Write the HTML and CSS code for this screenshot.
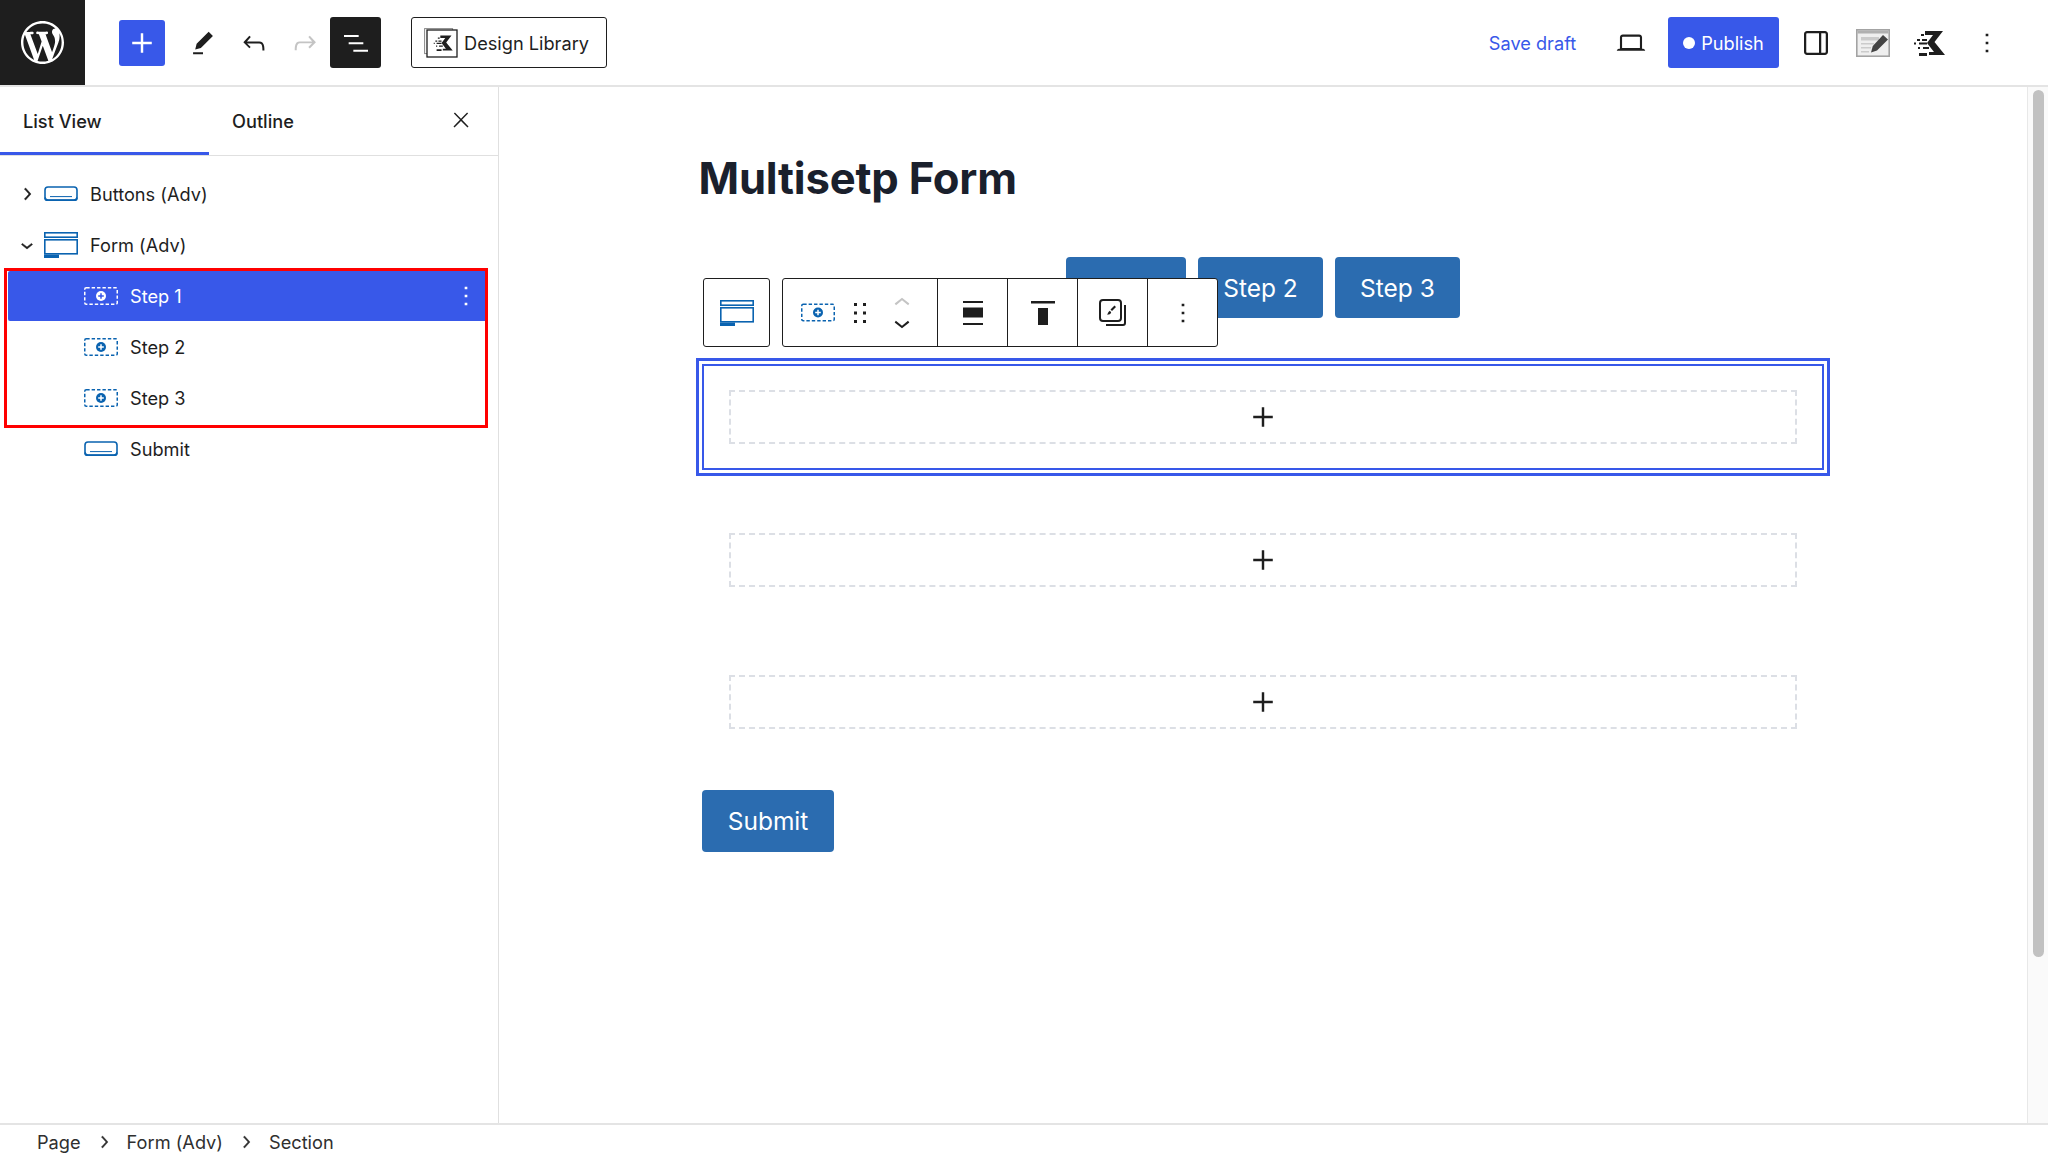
FILE: index.html
```html
<!DOCTYPE html>
<html lang="en">
<head>
<meta charset="utf-8">
<title>Multisetp Form</title>
<link rel="stylesheet" href="styles.css">
</head>
<body>
<svg class="defs" aria-hidden="true">
  <symbol id="i-section" viewBox="0 0 34 18">
    <rect x="0.75" y="0.75" width="32.5" height="16.5" rx="1.5" fill="none" stroke="currentColor" stroke-width="1.5" stroke-dasharray="3.4 2"/>
    <circle cx="17" cy="9" r="5" fill="currentColor"/>
    <path d="M14.2 9h5.6M17 6.2v5.6" stroke="var(--plus, #fff)" stroke-width="1.5"/>
  </symbol>
  <symbol id="i-buttons" viewBox="0 0 34 15">
    <rect x="1" y="1" width="32" height="13" rx="3" fill="none" stroke="currentColor" stroke-width="1.6"/>
    <path d="M1 11.5v0c0 1.7 1.3 3 3 3h26c1.7 0 3-1.3 3-3" fill="none" stroke="currentColor" stroke-width="1.8"/>
    <path d="M6 10.6h22" stroke="currentColor" stroke-width="1"/>
  </symbol>
  <symbol id="i-form" viewBox="0 0 34 26">
    <rect x="0.8" y="0.8" width="32.4" height="4.4" fill="none" stroke="currentColor" stroke-width="1.6"/>
    <rect x="0.8" y="7.8" width="32.4" height="14" fill="none" stroke="currentColor" stroke-width="1.6"/>
    <rect x="0" y="22.5" width="15" height="3.5" fill="currentColor"/>
  </symbol>
  <symbol id="i-more" viewBox="0 0 24 24"><path d="M13 19h-2v-2h2v2zm0-6h-2v-2h2v2zm0-6h-2V5h2v2z"/></symbol>
  <symbol id="i-chev-r" viewBox="0 0 24 24"><path d="M10.6 6L9.4 7l4.6 5-4.6 5 1.2 1 5.4-6z"/></symbol>
  <symbol id="i-chev-d" viewBox="0 0 24 24"><path d="M17.5 11.6L12 16l-5.5-4.4.9-1.2L12 14l4.5-3.6 1 1.2z"/></symbol>
  <symbol id="i-chev-u" viewBox="0 0 24 24"><path d="M6.5 12.4L12 8l5.5 4.4-.9 1.2L12 10l-4.5 3.6-1-1.2z"/></symbol>
  <symbol id="i-plus" viewBox="0 0 18 18"><path d="M8 1h2v7h7v2h-7v7H8v-7H1V8h7z"/></symbol>
  <symbol id="i-kadence" viewBox="0 0 32 26">
    <path d="M11 1H29L20.5 12L31 25H15V22H20L13 13L19 5H11Z"/>
    <path d="M7 4h3v2H7zM3 9h3v2H3zM8 9h5v2H8zM0 12.500h2v2H0zM5 12.500h8v2H5zM4 17h2v2H4zM9 17h6v2H9zM5 23h8v3H5z"/>
  </symbol>
</svg>

<header class="topbar">
  <a class="wp-logo" aria-label="WordPress">
    <svg class="wp-mark" viewBox="0 0 20 20"><path d="M20 10c0-5.51-4.49-10-10-10C4.48 0 0 4.49 0 10c0 5.52 4.48 10 10 10 5.51 0 10-4.48 10-10zM7.78 15.37L4.37 6.22c.55-.02 1.17-.08 1.17-.08.5-.06.44-1.13-.06-1.11 0 0-1.45.11-2.37.11-.18 0-.37 0-.58-.01C4.12 2.69 6.87 1.11 10 1.11c2.33 0 4.45.87 6.05 2.34-.68-.11-1.65.39-1.65 1.58 0 .74.45 1.36.9 2.1.35.61.55 1.36.55 2.46 0 1.49-1.4 5-1.4 5l-3.03-8.37c.54-.02.82-.17.82-.17.5-.05.44-1.25-.06-1.22 0 0-1.44.12-2.38.12-.87 0-2.33-.12-2.33-.12-.5-.03-.56 1.2-.06 1.22l.92.08 1.26 3.41zM17.41 10c.24-.64.74-1.87.43-4.25.7 1.29 1.05 2.71 1.05 4.25 0 3.29-1.73 6.24-4.4 7.78.97-2.59 1.94-5.2 2.92-7.78zM6.1 18.09C3.12 16.65 1.11 13.53 1.11 10c0-1.3.23-2.48.72-3.59C3.25 10.3 4.67 14.2 6.1 18.09zm4.03-6.63l2.58 6.98c-.86.29-1.76.45-2.71.45-.79 0-1.57-.11-2.29-.33.81-2.38 1.62-4.74 2.42-7.1z"/></svg>
  </a>
  <div class="tools-left">
    <button class="btn-inserter" aria-label="Add"><svg class="ic-plus-w"><use href="#i-plus"/></svg></button>
    <button class="tool"><svg class="ic-pen" viewBox="0 0 24 24"><path d="m19 7-3-3-8.5 8.5-1 4 4-1L19 7Zm-7 11.5H5V20h7v-1.5Z"/></svg></button>
    <button class="tool"><svg class="ic32" viewBox="0 0 24 24"><path d="M18.3 11.7c-.6-.6-1.4-.9-2.3-.9H6.7l2.9-3.3-1.1-1-4.5 5L8.5 16l1-1-2.7-2.7H16c.5 0 .9.2 1.3.5 1 1 1 3.4 1 4.5v.3h1.500v-.2c0-1.500 0-4.300-1.500-5.700z"/></svg></button>
    <button class="tool tool-muted"><svg class="ic32" viewBox="0 0 24 24"><path d="M15.6 6.5l-1.1 1 2.9 3.3H8c-.9 0-1.7.3-2.3.9-1.4 1.5-1.4 4.2-1.4 5.6v.2h1.5v-.3c0-1.1 0-3.5 1-4.5.3-.3.7-.5 1.3-.5h9.2L14.5 15l1.1 1.1 4.6-4.6-4.6-5z"/></svg></button>
    <button class="tool tool-on"><svg class="ic32" viewBox="0 0 24 24"><path d="M3 6h11v1.5H3V6Zm3.5 5.5h11V13h-11v-1.5ZM21 17H10v1.5h11V17Z"/></svg></button>
    <button class="btn-library">
      <svg class="ic-library" viewBox="0 0 34 30">
        <rect x="0.6" y="0.6" width="28" height="25" fill="#fff" stroke="#888" stroke-width="1"/>
        <rect x="3" y="2" width="30" height="27" fill="#fff" stroke="#1e1e1e" stroke-width="1.3"/>
        <g transform="translate(9.500 7) scale(.62)"><use href="#i-kadence" width="32" height="26"/></g>
      </svg>
      <span>Design Library</span>
    </button>
  </div>
  <div class="tools-right">
    <button class="btn-save">Save draft</button>
    <button class="tool"><svg class="ic34" viewBox="0 0 24 24"><path d="M20.5 16h-.7V8c0-1.1-.9-2-2-2H6.2c-1.1 0-2 .9-2 2v8h-.7c-.8 0-1.5.7-1.5 1.5h20c0-.8-.7-1.5-1.5-1.5zM5.7 8c0-.3.2-.5.5-.5h11.6c.3 0 .5.2.5.5v7.6H5.7V8z"/></svg></button>
    <button class="btn-publish"><i class="dot"></i>Publish</button>
    <button class="tool tool-w"><svg class="ic-side" viewBox="0 0 24 24"><path d="M18 4H6c-1.1 0-2 .9-2 2v12c0 1.1.9 2 2 2h12c1.1 0 2-.9 2-2V6c0-1.1-.9-2-2-2zm-4 14.5H6c-.3 0-.5-.2-.5-.5V6c0-.3.2-.5.5-.5h8v13zm4.5-.5c0 .3-.2.5-.5.5h-2.500v-13H18c.3 0 .5.2.5.5v12z"/></svg></button>
    <button class="tool tool-w">
      <svg class="ic-formedit" viewBox="0 0 34 28">
        <rect x="0.8" y="0.8" width="32.4" height="26.4" fill="#efefef" stroke="#a3a3a3" stroke-width="1.6"/>
        <rect x="1.5" y="1.5" width="31" height="3" fill="#b0b0b0"/>
        <path d="M5 8h18v3.500H5zM5 14h13v1.600H5zM5 18h10v1.600H5zM5 22h8v1.600H5z" fill="#cbcbcb"/>
        <path d="M27 6l5 4.500L21 21.500l-6 2 1.800-6.500z" fill="#444"/>
      </svg>
    </button>
    <button class="tool tool-w"><svg class="ic-kad"><use href="#i-kadence"/></svg></button>
    <button class="tool tool-w"><svg class="ic32"><use href="#i-more"/></svg></button>
  </div>
</header>

<main class="workspace">
  <aside class="sidebar">
    <div class="tabs">
      <span class="tab tab-on">List View</span>
      <span class="tab">Outline</span>
      <button class="tab-close" aria-label="Close"><svg class="ic24" viewBox="0 0 24 24"><path d="M13 11.800l6.100-6.300-1-1-6.100 6.200-6.100-6.200-1 1 6.100 6.300-6.500 6.700 1 1 6.500-6.600 6.500 6.600 1-1z"/></svg></button>
    </div>
    <div class="tree">
      <div class="row row-top">
        <svg class="caret"><use href="#i-chev-r"/></svg>
        <svg class="ic-block ic-h15"><use href="#i-buttons"/></svg>
        <span>Buttons (Adv)</span>
      </div>
      <div class="row row-top">
        <svg class="caret"><use href="#i-chev-d"/></svg>
        <svg class="ic-block ic-h26"><use href="#i-form"/></svg>
        <span>Form (Adv)</span>
      </div>
      <div class="row row-child row-selected">
        <svg class="ic-block ic-h18"><use href="#i-section"/></svg>
        <span>Step 1</span>
        <svg class="row-more"><use href="#i-more"/></svg>
      </div>
      <div class="row row-child">
        <svg class="ic-block ic-h18"><use href="#i-section"/></svg>
        <span>Step 2</span>
      </div>
      <div class="row row-child">
        <svg class="ic-block ic-h18"><use href="#i-section"/></svg>
        <span>Step 3</span>
      </div>
      <div class="row row-child">
        <svg class="ic-block ic-h15"><use href="#i-buttons"/></svg>
        <span>Submit</span>
      </div>
      <div class="annotation"></div>
    </div>
  </aside>

  <section class="canvas">
    <h1 class="title">Multisetp Form</h1>
    <div class="steps">
      <a class="kb-btn kb-step">Step 1</a>
      <a class="kb-btn kb-step">Step 2</a>
      <a class="kb-btn kb-step">Step 3</a>
    </div>
    <div class="form">
      <div class="block-toolbar">
        <div class="tb-group">
          <button class="tb-cell"><svg class="ic-tb-form"><use href="#i-form"/></svg></button>
        </div>
        <div class="tb-group">
          <div class="tb-cell tb-mover">
            <svg class="ic-tb-section"><use href="#i-section"/></svg>
            <svg class="ic-drag" viewBox="0 0 12 20"><path d="M0 0h3v3H0zM9 0h3v3H9zM0 8.500h3v3H0zM9 8.500h3v3H9zM0 17h3v3H0zM9 17h3v3H9z"/></svg>
            <span class="movers">
              <svg class="ic-mv ic-mv-off"><use href="#i-chev-u"/></svg>
              <svg class="ic-mv ic-mv-down"><use href="#i-chev-d"/></svg>
            </span>
          </div>
          <button class="tb-cell">
            <svg class="ic-tb" viewBox="0 0 24 26"><path d="M2 1h20v2H2zM2 7.500h20v10H2zM2 23h20v2H2z"/></svg>
          </button>
          <button class="tb-cell">
            <svg class="ic-tb" viewBox="0 0 24 26"><path d="M0 1h24v2.400H0zM7 8h10v17H7z"/></svg>
          </button>
          <button class="tb-cell">
            <svg class="ic-tb-style" viewBox="0 0 28 28">
              <rect x="1" y="1" width="21" height="21" rx="3" fill="none" stroke="#1e1e1e" stroke-width="2"/>
              <path d="M26 6v18c0 1.200-.8 2-2 2H7" fill="none" stroke="#1e1e1e" stroke-width="2"/>
              <path d="M15.500 6.500l1.500 1.500-4 4-1.500-1.500zM10.800 11.800l1.400 1.400c-.5 1.800-2 2.500-4 2.500.7-1 .8-2.900 2.600-3.900z" fill="#1e1e1e"/>
            </svg>
          </button>
          <button class="tb-cell"><svg class="ic32"><use href="#i-more"/></svg></button>
        </div>
      </div>
      <div class="form-section is-selected">
        <div class="appender"><svg class="ic-add"><use href="#i-plus"/></svg></div>
      </div>
      <div class="form-section">
        <div class="appender"><svg class="ic-add"><use href="#i-plus"/></svg></div>
      </div>
      <div class="form-section">
        <div class="appender"><svg class="ic-add"><use href="#i-plus"/></svg></div>
      </div>
      <a class="kb-btn kb-submit">Submit</a>
    </div>
  </section>

  <div class="scrollbar"><div class="scroll-thumb"></div></div>
</main>

<footer class="crumbs">
  <span>Page</span>
  <svg class="crumb-sep"><use href="#i-chev-r"/></svg>
  <span>Form (Adv)</span>
  <svg class="crumb-sep"><use href="#i-chev-r"/></svg>
  <span>Section</span>
</footer>
</body>
</html>
```

FILE: styles.css
```css
* { box-sizing: border-box; }
html, body { height: 100%; }
body {
  margin: 0;
  height: 1159px;
  display: flex;
  flex-direction: column;
  overflow: hidden;
  background: #fff;
  color: #1e1e1e;
  font-family: Inter, "Liberation Sans", sans-serif;
  font-size: 18.2px;
}
.defs { display: none; }
svg { display: block; fill: currentColor; flex: none; }
button {
  font: inherit;
  color: inherit;
  background: none;
  border: 0;
  padding: 0;
  display: flex;
  align-items: center;
  justify-content: center;
}

/* top bar */
.topbar {
  flex: none;
  height: 87px;
  display: flex;
  align-items: center;
  justify-content: space-between;
  border-bottom: 2px solid #e4e4e4;
}
.wp-logo {
  width: 85px;
  height: 85px;
  background: #1e1e1e;
  color: #fff;
  display: flex;
  align-items: center;
  justify-content: center;
}
.wp-mark { width: 43px; height: 43px; }
.tools-left { flex: 1; display: flex; align-items: center; padding-left: 34px; }
.tools-right { display: flex; align-items: center; padding-right: 33px; }
.btn-inserter {
  width: 46px;
  height: 46px;
  margin-right: 12px;
  background: #3858e9;
  border-radius: 3px;
  color: #fff;
}
.ic-plus-w { width: 22px; height: 22px; }
.tool { width: 51px; height: 51px; border-radius: 3px; }
.tool-w { width: 57px; }
.tool-muted { color: #c4c4c4; }
.tool-on { background: #1e1e1e; color: #fff; }
.ic32 { width: 32px; height: 32px; }
.ic34 { width: 34px; height: 34px; }
.ic24 { width: 24px; height: 24px; }
.ic-pen { width: 34px; height: 34px; }
.ic-side { width: 36px; height: 36px; }
.btn-library {
  width: 196px;
  height: 51px;
  margin-left: 30px;
  padding-left: 12px;
  gap: 6px;
  justify-content: flex-start;
  border: 1.5px solid #1e1e1e;
  border-radius: 3px;
}
.ic-library { width: 34px; height: 30px; }
.btn-save { color: #3858e9; width: 87px; margin-right: 29px; white-space: nowrap; }
.btn-publish {
  width: 111px;
  height: 51px;
  margin: 0 8px 0 12px;
  gap: 6px;
  background: #3858e9;
  color: #fff;
  border-radius: 3px;
}
.dot { width: 12px; height: 12px; border-radius: 50%; background: #fff; }
.ic-formedit { width: 34px; height: 28px; }
.ic-kad { width: 32px; height: 26px; }

/* workspace */
.workspace { flex: 1; min-height: 0; display: flex; }
.sidebar { flex: none; width: 499px; border-right: 1px solid #e0e0e0; }
.tabs {
  height: 69px;
  display: flex;
  align-items: stretch;
  position: relative;
  border-bottom: 1.5px solid #e0e0e0;
}
.tab {
  width: 209px;
  padding: 0 0 0 23px;
  display: flex;
  align-items: center;
  font-weight: 500;
}
.tab-on { box-shadow: inset 0 -3px 0 #3858e9; }
.tab-close { position: absolute; right: 25px; top: 21px; }
.tree { position: relative; padding-top: 12px; }
.row { height: 51px; display: flex; align-items: center; }
.row-top { padding-left: 15px; }
.caret { width: 24px; height: 24px; margin-right: 5px; stroke: currentColor; stroke-width: .5; }
.row-child { padding-left: 84px; }
.ic-block { width: 34px; margin-right: 12px; color: #0a63b0; }
.ic-h15 { height: 15px; }
.ic-h18 { height: 18px; }
.ic-h26 { height: 26px; }
.row-selected {
  height: 50px;
  margin: 1px 10px 0 8px;
  padding-left: 76px;
  background: #3858e9;
  color: #fff;
  border-radius: 2px;
  --plus: #3858e9;
}
.row-selected .ic-block { color: #fff; }
.row-more { width: 32px; height: 32px; margin-left: auto; margin-right: 6px; }
.annotation {
  position: absolute;
  left: 4px;
  top: 112px;
  width: 484px;
  height: 160px;
  border: 3.5px solid #f00;
}

/* canvas */
.canvas { flex: 1; min-width: 0; padding-top: 67px; }
.title {
  width: 1129px;
  margin: 0 auto 53px;
  font-size: 43.6px;
  line-height: 50px;
  font-weight: 700;
  letter-spacing: -0.2px;
  color: #1a202c;
}
.steps { display: flex; justify-content: center; gap: 12px; margin-bottom: 46px; }
.kb-btn {
  display: flex;
  align-items: center;
  justify-content: center;
  background: #2b6cb0;
  color: #fff;
  font-size: 24.5px;
  border-radius: 4px;
}
.kb-step { width: 125px; height: 61px; }
.kb-step:first-child { width: 120px; }
.form { width: 1122px; margin: 0 auto; position: relative; display: flex; flex-direction: column; gap: 36px; }
.form-section { height: 106px; padding: 27px; }
.is-selected {
  border: 2px solid #3858e9;
  padding: 24px 25px;
  outline: 3px solid #3858e9;
  outline-offset: 3px;
}
.appender {
  height: 54px;
  display: flex;
  align-items: center;
  justify-content: center;
  border: 2px dashed #dcdfe5;
}
.ic-add { width: 22px; height: 22px; }
.kb-submit { width: 132px; height: 62px; }

/* block toolbar floats over the content */
.block-toolbar {
  position: absolute;
  left: 1px;
  top: -86px;
  display: flex;
  gap: 12px;
  z-index: 2;
}
.tb-group {
  display: flex;
  height: 69px;
  background: #fff;
  border: 1.5px solid #1e1e1e;
  border-radius: 3px;
}
.tb-cell { width: 70px; height: 100%; border-left: 1.5px solid #1e1e1e; display: flex; align-items: center; justify-content: center; }
.tb-cell:first-child { border-left: 0; }
.tb-group:first-child .tb-cell { width: 65px; }
.tb-mover { width: 154px; justify-content: flex-start; padding-left: 18px; }
.ic-tb-form { width: 34px; height: 26px; color: #0a63b0; }
.ic-tb-section { width: 34px; height: 19px; color: #0a63b0; margin-right: 19px; }
.ic-drag { width: 12px; height: 20px; margin-right: 20px; }
.movers { display: flex; flex-direction: column; }
.ic-mv { width: 32px; height: 32px; }
.ic-mv-down { margin-top: -12px; }
.ic-mv-off { color: #c4c4c4; }
.ic-tb { width: 24px; height: 26px; }
.ic-tb-style { width: 28px; height: 28px; }

/* scrollbar */
.scrollbar { flex: none; width: 21px; padding: 3px 0 0 5px; background: #fafafa; border-left: 1px solid #e8e8e8; }
.scroll-thumb { width: 11px; height: 867px; border-radius: 6px; background: #c1c1c1; }

/* breadcrumb */
.crumbs {
  flex: none;
  height: 36px;
  padding-left: 37px;
  display: flex;
  align-items: center;
  color: #2f2f2f;
  border-top: 2px solid #e4e4e4;
}
.crumb-sep { width: 24px; height: 24px; margin: 0 11px; stroke: currentColor; stroke-width: .4; }
```
